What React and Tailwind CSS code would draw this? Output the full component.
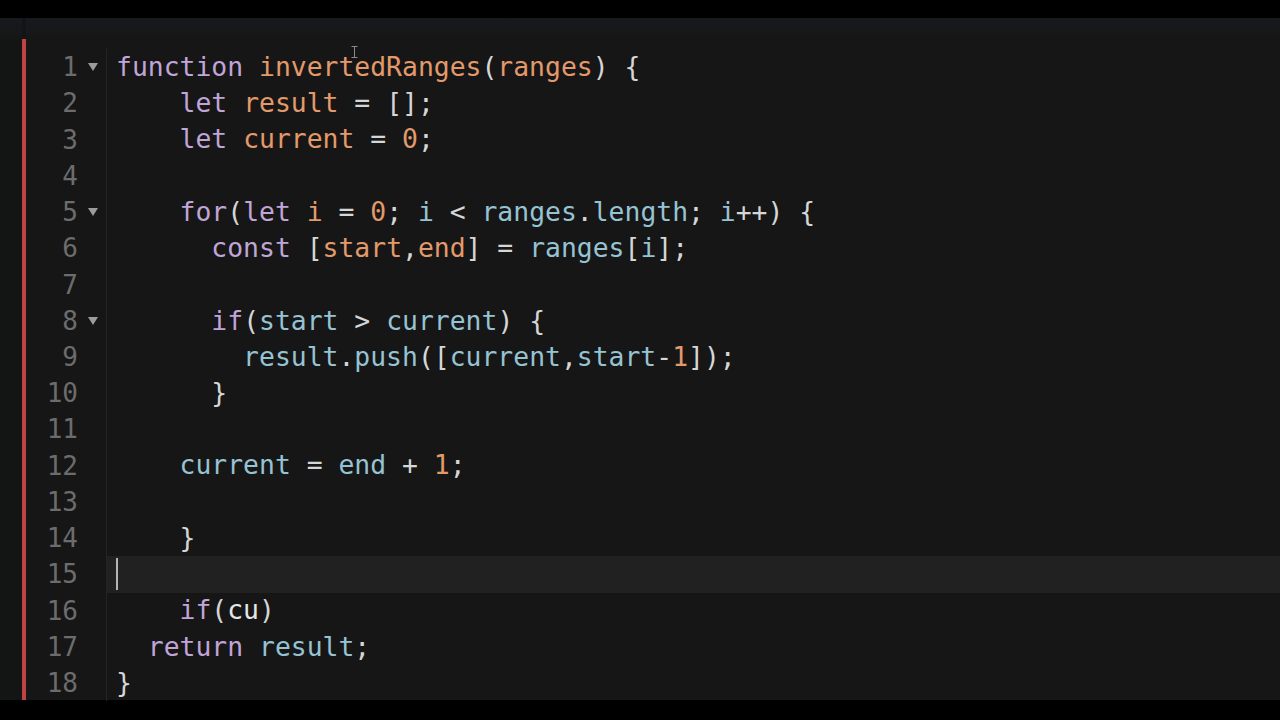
const C = {
  k: "text-[#c0a5d6]",
  o: "text-[#e39a6b]",
  t: "text-[#96c3d3]",
  p: "text-[#d6d6d6]",
  w: "text-[#e6e6e6]",
};

const lines = [
  [["k", "function"], ["p", " "], ["o", "invertedRanges"], ["p", "("], ["o", "ranges"], ["p", ") {"]],
  [["p", "    "], ["k", "let"], ["p", " "], ["o", "result"], ["p", " = [];"]],
  [["p", "    "], ["k", "let"], ["p", " "], ["o", "current"], ["p", " = "], ["o", "0"], ["p", ";"]],
  [],
  [["p", "    "], ["k", "for"], ["p", "("], ["k", "let"], ["p", " "], ["o", "i"], ["p", " = "], ["o", "0"], ["p", "; "], ["t", "i"], ["p", " < "], ["t", "ranges"], ["p", "."], ["t", "length"], ["p", "; "], ["t", "i"], ["p", "++) {"]],
  [["p", "      "], ["k", "const"], ["p", " ["], ["o", "start"], ["p", ","], ["o", "end"], ["p", "] = "], ["t", "ranges"], ["p", "["], ["t", "i"], ["p", "];"]],
  [],
  [["p", "      "], ["k", "if"], ["p", "("], ["t", "start"], ["p", " > "], ["t", "current"], ["p", ") {"]],
  [["p", "        "], ["t", "result"], ["p", "."], ["t", "push"], ["p", "(["], ["t", "current"], ["p", ","], ["t", "start"], ["p", "-"], ["o", "1"], ["p", "]);"]],
  [["p", "      }"]],
  [],
  [["p", "    "], ["t", "current"], ["p", " = "], ["t", "end"], ["p", " + "], ["o", "1"], ["p", ";"]],
  [],
  [["p", "    }"]],
  [],
  [["p", "    "], ["k", "if"], ["p", "("], ["w", "cu"], ["p", ")"]],
  [["p", "  "], ["k", "return"], ["p", " "], ["t", "result"], ["p", ";"]],
  [["p", "}"]],
];

const folds = [1, 5, 8];

const App = () => {
  return (
    <div className="w-[1280px] h-[720px] bg-black flex flex-col overflow-hidden relative">
      <div className="h-[18px] shrink-0 bg-black" />
      <div className="h-[682px] shrink-0 flex bg-[#161616] relative">
        {/* top tint band */}
        <div className="absolute left-0 right-0 top-0 h-[22px] bg-gradient-to-b from-[#151a1d] to-[#161616]" />
        <div className="w-[22px] shrink-0 bg-[#131414]" />
        <div className="w-[4px] shrink-0 pt-[21px] bg-[#141414] relative">
          <div className="h-full bg-[#c04343]" />
        </div>
        <div className="flex-1 pt-[31px] relative">
          {lines.map((tokens, i) => {
            const n = i + 1;
            const active = n === 15;
            return (
              <div key={n} className="flex h-[36.24px] items-center">
                <div
                  className="w-[52px] shrink-0 text-right text-[#6c6c6c] text-[26px] leading-none"
                  style={{ fontFamily: '"DejaVu Sans Mono", monospace' }}
                >
                  {n}
                </div>
                <div className="w-[28px] shrink-0 h-full flex items-center pl-[10px]">
                  {folds.includes(n) && (
                    <svg width="10" height="8" viewBox="0 0 10 8">
                      <path d="M0 0 L10 0 L5 8 Z" fill="#9c9c9c" />
                    </svg>
                  )}
                </div>
                <div
                  className={
                    "flex-1 h-full flex items-center border-l border-[#242424] pl-[9px] whitespace-pre text-[26.4px] leading-none " +
                    (active ? "bg-[#212121]" : "")
                  }
                  style={{ fontFamily: '"DejaVu Sans Mono", monospace' }}
                >
                  {active && <span className="w-[2px] h-[32px] bg-[#b4b4b4]" />}
                  {tokens.map(([c, s], j) => (
                    <span key={j} className={C[c]}>
                      {s}
                    </span>
                  ))}
                </div>
              </div>
            );
          })}
        </div>
        {/* mouse I-beam */}
        <svg className="absolute left-[351px] top-[28px]" width="7" height="12" viewBox="0 0 7 12">
          <path d="M0.5 0.5 H6.5 M3.5 0.5 V11.5 M0.5 11.5 H6.5" stroke="#8a8a8a" strokeWidth="1" fill="none" />
        </svg>
      </div>
      <div className="flex-1 bg-black" />
    </div>
  );
};

export default App;
